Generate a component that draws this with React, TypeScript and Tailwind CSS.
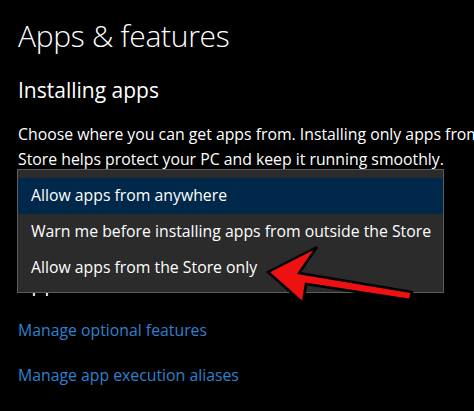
export default function App() {
  const options = [
    "Allow apps from anywhere",
    "Warn me before installing apps from outside the Store",
    "Allow apps from the Store only",
  ];

  return (
    <div
      className="relative w-[474px] h-[411px] overflow-hidden bg-black text-white"
      style={{ fontFamily: '"Segoe UI", "Open Sans", "Noto Sans", sans-serif' }}
    >
      <div className="pl-[18px] pt-[14px]">
        <h1 className="text-[30px] font-light leading-[44px] tracking-[-0.3px]">Apps &amp; features</h1>
        <h2 className="mt-[17px] text-[21px] leading-[30px]">Installing apps</h2>
        <p className="mt-[17px] text-[15.8px] leading-[25px] whitespace-nowrap">
          Choose where you can get apps from. Installing only apps from the
          <br />
          Store helps protect your PC and keep it running smoothly.
        </p>

        {/* section heading mostly hidden by the open list */}
        <h2 className="mt-[96px] text-[21px] leading-[30px]">Apps &amp; features</h2>

        <div className="mt-[20px] flex flex-col gap-[20px] text-[15.8px] leading-[25px] text-[#2f80cf]">
          <span>Manage optional features</span>
          <span>Manage app execution aliases</span>
        </div>
      </div>

      {/* open dropdown list */}
      <div className="absolute left-[17px] top-[169px] w-[427px] border border-[#5c5c5c] bg-[#2b2b2b] pt-[8px] pb-[6px]">
        {options.map((o, i) => (
          <div
            key={o}
            className={`h-[36px] flex items-center pl-[13px] text-[15.8px] whitespace-nowrap ${
              i === 0 ? "bg-[#00284a]" : ""
            }`}
          >
            {o}
          </div>
        ))}
      </div>

      {/* red annotation arrow */}
      <svg className="absolute left-0 top-0" width="474" height="411" viewBox="0 0 474 411">
        <polygon
          points="268,272 317,247 299,273 412,292 410,300 306,284 303,303"
          fill="#ee1111"
          stroke="#000"
          strokeWidth="2.5"
          strokeLinejoin="miter"
        />
      </svg>
    </div>
  );
}
